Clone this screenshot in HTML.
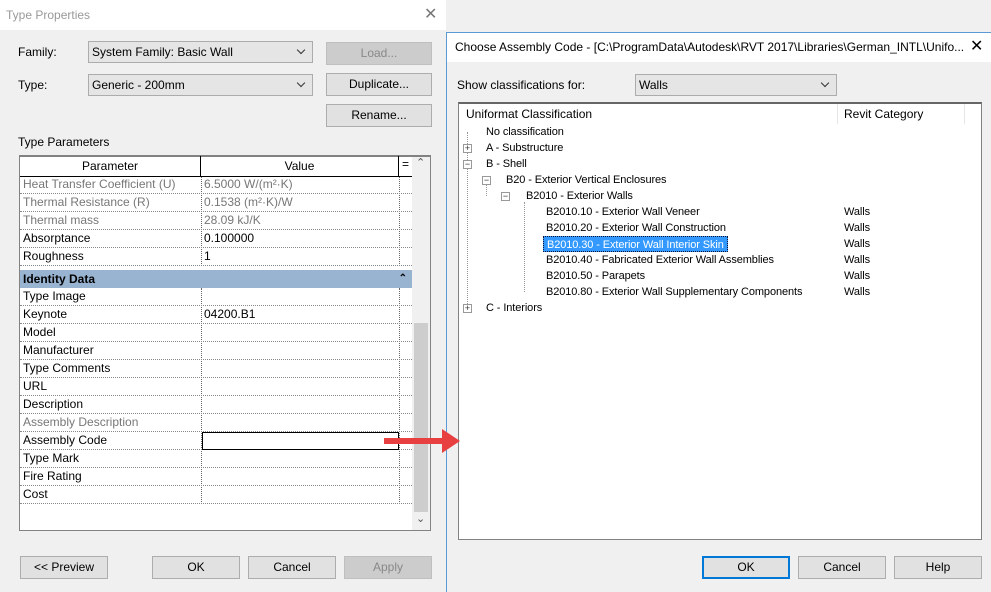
<!DOCTYPE html><html><head><style>
*{box-sizing:border-box;margin:0;padding:0}
body{width:991px;height:592px;position:relative;overflow:hidden;background:#f0f0f0;font-family:"Liberation Sans",sans-serif;font-size:12px;color:#000}
.a{position:absolute}
.btn{position:absolute;background:#e1e1e1;border:1px solid #adadad;text-align:center;line-height:20px;height:23px}
.dd{position:absolute;background:#e5e5e5;border:1px solid #acacac;height:22px;line-height:20px;padding-left:3px}
.dd:after{content:"";position:absolute;right:8px;top:5px;width:5px;height:5px;border-right:1px solid #333;border-bottom:1px solid #333;transform:rotate(45deg)}
.row{position:absolute;left:20px;width:392px;height:18px;border-bottom:1px dotted #888;line-height:17px}
.row span{position:absolute;left:3px}
.row i{font-style:normal;position:absolute;left:184px}
.g{color:#777}
.t{position:absolute;height:16px;line-height:16px;white-space:nowrap;font-size:11px;letter-spacing:-0.1px}
.pm{position:absolute;width:9px;height:9px;border:1px solid #999;background:#fff;font-size:9px;line-height:7px;text-align:center;color:#333}
</style></head><body>
<div class="a" style="left:0;top:0;width:446px;height:30px;background:#fff"></div>
<div class="a" style="left:6px;top:8px;font-size:12px;color:#999">Type Properties</div>
<div class="a" style="left:424px;top:4px;font-size:16px;color:#777">✕</div>
<div class="a" style="left:18px;top:45px">Family:</div>
<div class="a" style="left:18px;top:78px">Type:</div>
<div class="dd" style="left:88px;top:41px;width:225px">System Family: Basic Wall</div>
<div class="dd" style="left:88px;top:74px;width:225px">Generic - 200mm</div>
<div class="btn" style="left:326px;top:42px;width:106px;background:#ccc;border-color:#bfbfbf;color:#888">Load...</div>
<div class="btn" style="left:326px;top:73px;width:106px">Duplicate...</div>
<div class="btn" style="left:326px;top:104px;width:106px">Rename...</div>
<div class="a" style="left:18px;top:135px">Type Parameters</div>
<div class="a" style="left:19px;top:155px;width:412px;height:376px;background:#fff;border:1px solid #828282;border-top:2px solid #828282"></div>
<div class="a" style="left:20px;top:156px;width:392px;height:21px;border-bottom:1px solid #000"></div>
<div class="a" style="left:20px;top:156px;width:181px;height:21px;line-height:20px;text-align:center;border-right:1px solid #000">Parameter</div>
<div class="a" style="left:201px;top:156px;width:198px;height:21px;line-height:20px;text-align:center;border-right:1px solid #000">Value</div>
<div class="a" style="left:402px;top:157px">=</div>
<div class="a" style="left:201px;top:177px;width:1px;height:89px;border-left:1px dotted #666"></div>
<div class="a" style="left:399px;top:177px;width:1px;height:89px;border-left:1px dotted #666"></div>
<div class="a" style="left:201px;top:288px;width:1px;height:216px;border-left:1px dotted #666"></div>
<div class="a" style="left:399px;top:288px;width:1px;height:216px;border-left:1px dotted #666"></div>
<div class="row g" style="top:176px"><span>Heat Transfer Coefficient (U)</span><i>6.5000 W/(m²·K)</i></div>
<div class="row g" style="top:194px"><span>Thermal Resistance (R)</span><i>0.1538 (m²·K)/W</i></div>
<div class="row g" style="top:212px"><span>Thermal mass</span><i>28.09 kJ/K</i></div>
<div class="row" style="top:230px"><span>Absorptance</span><i>0.100000</i></div>
<div class="row" style="top:248px"><span>Roughness</span><i>1</i></div>
<div class="a" style="left:20px;top:270px;width:392px;height:18px;background:#99b4d1;font-weight:bold;line-height:18px;padding-left:3px">Identity Data<span style="position:absolute;right:5px;font-size:10px">⌃</span></div>
<div class="row" style="top:288px"><span>Type Image</span></div>
<div class="row" style="top:306px"><span>Keynote</span><i>04200.B1</i></div>
<div class="row" style="top:324px"><span>Model</span></div>
<div class="row" style="top:342px"><span>Manufacturer</span></div>
<div class="row" style="top:360px"><span>Type Comments</span></div>
<div class="row" style="top:378px"><span>URL</span></div>
<div class="row" style="top:396px"><span>Description</span></div>
<div class="row g" style="top:414px"><span>Assembly Description</span></div>
<div class="row" style="top:432px"><span>Assembly Code</span></div>
<div class="row" style="top:450px"><span>Type Mark</span></div>
<div class="row" style="top:468px"><span>Fire Rating</span></div>
<div class="row" style="top:486px"><span>Cost</span></div>
<div class="a" style="left:202px;top:432px;width:197px;height:18px;border:1px solid #000"></div>
<div class="a" style="left:412px;top:157px;width:18px;height:373px;background:#f0f0f0"></div>
<div class="a" style="left:414px;top:323px;width:14px;height:189px;background:#cdcdcd"></div>
<div class="a" style="left:416px;top:156px;font-size:11px;color:#555">⌃</div>
<div class="a" style="left:416px;top:512px;font-size:11px;color:#555">⌄</div>
<div class="btn" style="left:20px;top:556px;width:88px">&lt;&lt; Preview</div>
<div class="btn" style="left:152px;top:556px;width:88px">OK</div>
<div class="btn" style="left:248px;top:556px;width:88px">Cancel</div>
<div class="btn" style="left:344px;top:556px;width:88px;background:#ccc;border-color:#bfbfbf;color:#888">Apply</div>
<div class="a" style="left:446px;top:32px;width:545px;height:560px;background:#f0f0f0;border-left:1px solid #5a9bd5;border-top:1px solid #5a9bd5"></div>
<div class="a" style="left:447px;top:33px;width:544px;height:29px;background:#fff"></div>
<div class="a" style="left:455px;top:40px;font-size:12px">Choose Assembly Code - [C:\ProgramData\Autodesk\RVT 2017\Libraries\German_INTL\Unifo...</div>
<div class="a" style="left:970px;top:36px;font-size:16px">✕</div>
<div class="a" style="left:457px;top:78px">Show classifications for:</div>
<div class="dd" style="left:635px;top:74px;width:202px">Walls</div>
<div class="a" style="left:458px;top:102px;width:524px;height:438px;background:#fff;border:1px solid #828282;border-top:2px solid #666"></div>
<div class="a" style="left:466px;top:107px">Uniformat Classification</div>
<div class="a" style="left:837px;top:104px;width:1px;height:20px;background:#e5e5e5"></div>
<div class="a" style="left:964px;top:104px;width:1px;height:20px;background:#e5e5e5"></div>
<div class="a" style="left:844px;top:107px">Revit Category</div>
<div class="a" style="left:467px;top:132px;height:176px;border-left:1px dotted #999"></div>
<div class="a" style="left:486px;top:180px;height:16px;border-left:1px dotted #999"></div>
<div class="a" style="left:524px;top:202px;height:90px;border-left:1px dotted #999"></div>
<div class="t" style="left:486px;top:124px">No classification</div>
<div class="t" style="left:486px;top:140px">A - Substructure</div>
<div class="t" style="left:486px;top:156px">B - Shell</div>
<div class="t" style="left:506px;top:172px">B20 - Exterior Vertical Enclosures</div>
<div class="t" style="left:526px;top:188px">B2010 - Exterior Walls</div>
<div class="t" style="left:546px;top:204px">B2010.10 - Exterior Wall Veneer</div>
<div class="t" style="left:546px;top:220px">B2010.20 - Exterior Wall Construction</div>
<div class="t" style="left:543px;top:236px;background:#3399ff;color:#fff;padding:0 3px;border:1px dotted #113">B2010.30 - Exterior Wall Interior Skin</div>
<div class="t" style="left:546px;top:252px">B2010.40 - Fabricated Exterior Wall Assemblies</div>
<div class="t" style="left:546px;top:268px">B2010.50 - Parapets</div>
<div class="t" style="left:546px;top:284px">B2010.80 - Exterior Wall Supplementary Components</div>
<div class="t" style="left:486px;top:300px">C - Interiors</div>
<div class="t" style="left:844px;top:204px">Walls</div><div class="t" style="left:844px;top:220px">Walls</div><div class="t" style="left:844px;top:236px">Walls</div><div class="t" style="left:844px;top:252px">Walls</div><div class="t" style="left:844px;top:268px">Walls</div><div class="t" style="left:844px;top:284px">Walls</div>
<div class="pm" style="left:463px;top:144px">+</div>
<div class="pm" style="left:463px;top:160px">−</div>
<div class="pm" style="left:482px;top:176px">−</div>
<div class="pm" style="left:501px;top:192px">−</div>
<div class="pm" style="left:463px;top:304px">+</div>
<div class="btn" style="left:702px;top:556px;width:88px;border:2px solid #0078d7;line-height:18px">OK</div>
<div class="btn" style="left:798px;top:556px;width:88px">Cancel</div>
<div class="btn" style="left:894px;top:556px;width:88px">Help</div>
<svg class="a" style="left:380px;top:425px" width="85" height="32"><path d="M4 13 H62 V4 L80 16 L62 28 V19 H4 Z" fill="#e84040"/></svg>
</body></html>
